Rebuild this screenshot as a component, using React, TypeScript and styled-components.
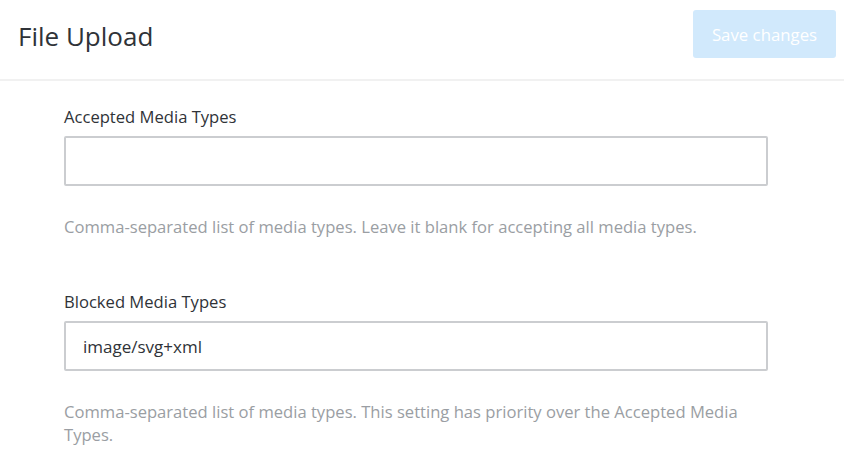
import React from 'react';
import styled, { createGlobalStyle } from 'styled-components';

const GlobalStyle = createGlobalStyle`
  html, body {
    margin: 0;
    padding: 0;
    background: #ffffff;
  }
  body {
    font-family: "Open Sans", "Noto Sans", sans-serif;
    color: #333333;
  }
`;

const Page = styled.div`
  width: 844px;
  min-height: 465px;
  background: #fff;
`;

const Header = styled.header`
  display: flex;
  justify-content: space-between;
  align-items: flex-start;
  height: 81px;
  padding: 10px 8px 0 18px;
  box-sizing: border-box;
  border-bottom: 2px solid #f1f1f1;
`;

const Title = styled.h1`
  margin: 8px 0 0;
  font-size: 26px;
  line-height: 36px;
  font-weight: 400;
  color: #2f3338;
`;

const SaveButton = styled.button`
  width: 143px;
  height: 48px;
  border: none;
  border-radius: 3px;
  background: #d1e9fc;
  color: #ffffff;
  font-family: inherit;
  font-size: 16.8px;
  cursor: default;
`;

const Content = styled.main`
  padding: 24px 0 0 64px;
`;

const Field = styled.div`
  width: 704px;
  margin-bottom: 52px;
`;

const Label = styled.label`
  display: block;
  font-size: 16.6px;
  line-height: 24px;
  color: #2f3338;
  margin-bottom: 7px;
`;

const Input = styled.input`
  display: block;
  width: 100%;
  height: 50px;
  box-sizing: border-box;
  border: 2px solid #cbcdd0;
  border-radius: 2px;
  padding: 0 17px;
  font-family: inherit;
  font-size: 17px;
  color: #2f3338;
  outline: none;
`;

const Help = styled.p`
  margin: 29px 0 0;
  font-size: 16.6px;
  line-height: 23px;
  color: #9a9ea3;
`;

export default function App() {
  return (
    <Page>
      <GlobalStyle />
      <Header>
        <Title>File Upload</Title>
        <SaveButton disabled>Save changes</SaveButton>
      </Header>
      <Content>
        <Field>
          <Label>Accepted Media Types</Label>
          <Input defaultValue="" />
          <Help>Comma-separated list of media types. Leave it blank for accepting all media types.</Help>
        </Field>
        <Field>
          <Label>Blocked Media Types</Label>
          <Input defaultValue="image/svg+xml" />
          <Help>Comma-separated list of media types. This setting has priority over the Accepted Media Types.</Help>
        </Field>
      </Content>
    </Page>
  );
}
